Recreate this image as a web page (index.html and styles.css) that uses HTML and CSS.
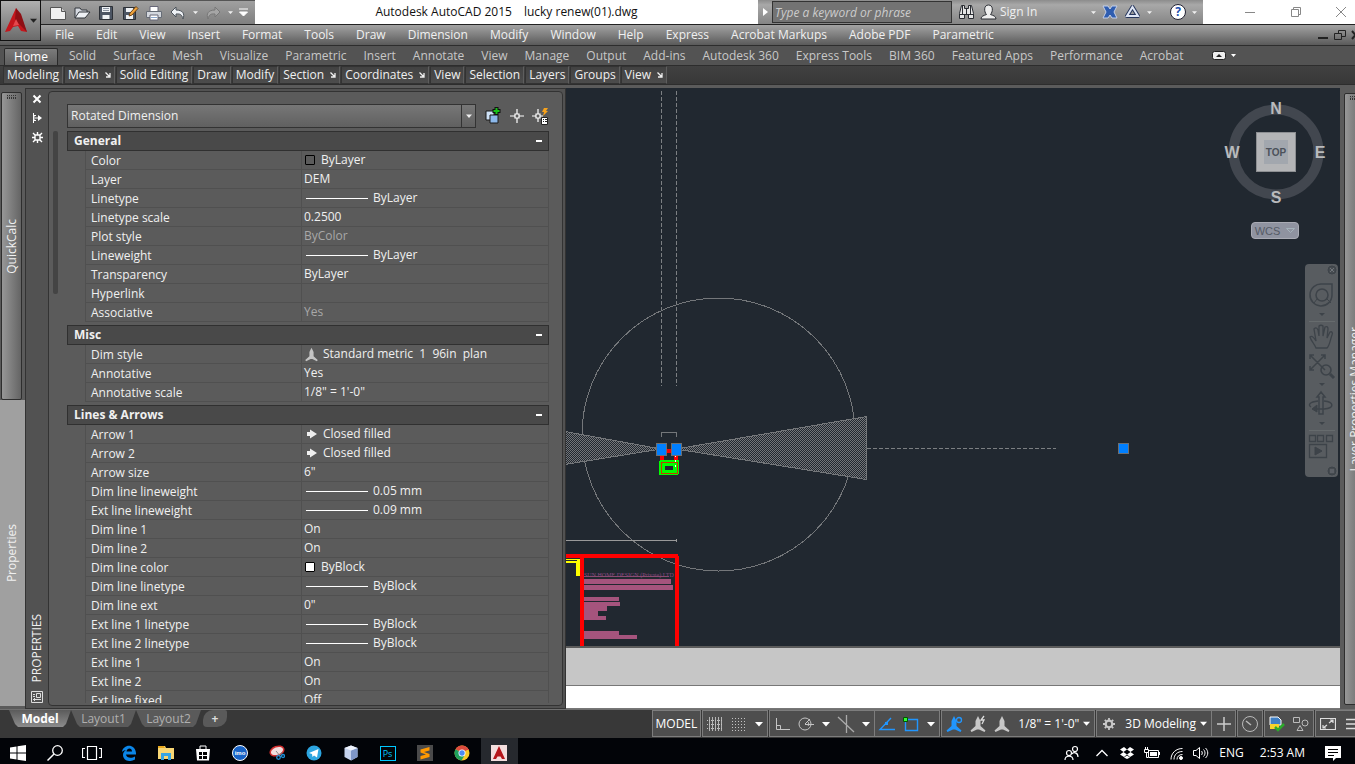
FILE: index.html
```
<!DOCTYPE html>
<html lang="en">
  <head>
    <meta charset="UTF-8" />
    <meta name="viewport" content="width=device-width, initial-scale=1.0" />
    <title>Autodesk AutoCAD 2015 - lucky renew(01).dwg</title>
    <link rel="stylesheet" href="styles.css">
  </head>
  <body>
    <!-- Shared icons -->
    <svg class="defs" aria-hidden="true">
      <symbol id="caret" viewBox="0 0 8 8"><path d="M0 2h8L4 6.500z" fill="currentColor" /></symbol>
      <symbol id="launch" viewBox="0 0 6 6"><path d="M0.500 0.500L4.500 4.500M5 1v4H1" fill="none" stroke="currentColor" stroke-width="1.300" /></symbol>
      <symbol id="scale" viewBox="0 0 18 18"><path d="M9 1l2.500 5v5l5 4.500-1 1.500-5.500-2.500H8L2.500 17l-1-1.500 5-4.500V6z" fill="currentColor" /></symbol>
      <symbol id="arrowhead" viewBox="0 0 12 10"><path d="M1 3h3V0.500L11 5 4 9.500V7H1z" fill="#eee" /></symbol>
      <symbol id="gear" viewBox="0 0 12 12"><circle cx="6" cy="6" r="3.300" fill="none" stroke="currentColor" stroke-width="2.200" /><path d="M6 0v12M0 6h12M1.800 1.800l8.400 8.400M10.200 1.800l-8.400 8.400" stroke="currentColor" stroke-width="1.800" stroke-dasharray="2.200 7.600" /></symbol>
    </svg>

    <header class="titlebar">
      <div class="quick-access">
        <button aria-label="New"><svg width="18" height="16"><path d="M1.500 2.500h11l4 4v8h-15z" fill="#f1f1f1" stroke="#555" /><path d="M12.500 2.500v4h4" fill="#ccc" stroke="#555" /></svg></button>
        <button aria-label="Open"><svg width="18" height="16"><path d="M2 13V3h5l1.500 2H14v2" fill="#d5d9e0" stroke="#33373c" /><path d="M2 13l4-6h11l-5 6z" fill="#eef1f5" stroke="#33373c" /></svg></button>
        <button aria-label="Save"><svg width="18" height="16"><path d="M2.500 1.500h13v13h-13z" fill="#4c5563" stroke="#2c3036" /><path d="M5 2h8v5H5zM5.500 10h7v4h-7z" fill="#eef1f4" /><path d="M6 3.500h6M6 5.500h6" stroke="#8a93a0" /></svg></button>
        <button aria-label="Save As"><svg width="18" height="16"><path d="M2.500 2.500h12v12h-12z" fill="#4c5563" stroke="#2c3036" /><path d="M5 3h7v4H5zM5 10h7v4H5z" fill="#eef1f4" /><path d="M8 11l1-3 6-6.500 2 2L11 10z" fill="#f0a33c" stroke="#6b4418" /></svg></button>
        <button aria-label="Plot"><svg width="18" height="16"><path d="M5 1.500h8V7H5z" fill="#fff" stroke="#667" /><path d="M1.500 6.500h15v6h-15z" fill="#d3d7de" stroke="#666c76" /><path d="M5 10h8v5H5z" fill="#fff" stroke="#667" /><path d="M6 12.500h6" stroke="#8ca9cf" /></svg></button>
        <button aria-label="Undo"><svg width="18" height="16"><path d="M7 2L2 7l5 5V9c4-.5 6 .5 7 5 2-5 0-9-7-9z" fill="#eef1f5" stroke="#4d545c" /></svg></button>
        <button class="drop" aria-label="Undo list"><svg width="5" height="5"><use href="#caret" /></svg></button>
        <button aria-label="Redo"><svg width="18" height="16"><path d="M11 2l5 5-5 5V9c-4-.5-6 .5-7 5-2-5 0-9 7-9z" fill="#a5a5a5" stroke="#777" /></svg></button>
        <button class="drop" aria-label="Redo list"><svg width="5" height="5"><use href="#caret" /></svg></button>
        <button class="drop" aria-label="Customize"><svg width="9" height="9"><path d="M0 1h9M0.500 4h8L4.500 8z" fill="#fff" stroke="#fff" /></svg></button>
      </div>
      <h1 class="title"><span>Autodesk AutoCAD 2015</span><span>lucky renew(01).dwg</span></h1>
      <div class="infocenter">
        <button class="search-toggle" aria-label="Collapse search"><svg width="5" height="8"><path d="M0 0l5 4-5 4z" fill="#fff" /></svg></button>
        <input type="text" class="search" aria-label="Search" placeholder="Type a keyword or phrase" />
        <button aria-label="Find"><svg width="18" height="18"><path d="M3.500 2.500h3v3h4v-3h3l2 8v5h-5v-4h-4v4h-5v-5z" fill="#e6e6e6" stroke="#2a2d33" /><path d="M4.500 3v8M12.500 3v8M2 11.500h5M10 11.500h5M8.500 6v5" stroke="#2a2d33" /></svg></button>
        <button class="sign-in"><svg width="18" height="18"><path d="M1 16c0-3 3-3.500 5.500-4.500C4 9 3.500 2 8.500 2S13 9 10.500 11.500C13 12.500 16 13 16 16z" fill="#eee" stroke="#2a2d33" /></svg>Sign In</button>
        <button class="drop" aria-label="Account menu"><svg width="5" height="5"><use href="#caret" /></svg></button>
        <button aria-label="Exchange"><svg width="16" height="16"><path d="M1 2h5l2 3 2-3h5l-3 6 3 6h-5l-2-3-2 3H1l3-6z" fill="#2f5db0" stroke="#c5d0e8" /></svg></button>
        <button aria-label="Stay connected"><svg width="17" height="16"><path d="M8.500 3L14 12H3z" fill="none" stroke="#26365c" stroke-width="4" stroke-linejoin="round" /><path d="M8.500 3L14 12H3z" fill="none" stroke="#dfe6f5" stroke-width="2" /></svg></button>
        <button class="drop" aria-label="Connect menu"><svg width="5" height="5"><use href="#caret" /></svg></button>
        <button class="help" aria-label="Help">?</button>
        <button class="drop" aria-label="Help menu"><svg width="5" height="5"><use href="#caret" /></svg></button>
      </div>
      <div class="window-buttons">
        <button aria-label="Minimize"><svg width="12" height="12"><path d="M1 6.500h10" stroke="#888" /></svg></button>
        <button aria-label="Restore"><svg width="12" height="12"><path d="M1.500 3.500h7v7h-7zM3.500 3V1.500h7v7H9" fill="none" stroke="#888" /></svg></button>
        <button aria-label="Close"><svg width="12" height="12"><path d="M1 1l10 10M11 1L1 11" stroke="#888" /></svg></button>
      </div>
    </header>

    <button class="app-button" aria-label="Application menu">
      <svg width="24" height="28"><path d="M12 1L1 25l5-1 3-4 5-1 3 5 6 1z" fill="#c4161c" /><path d="M12 1l-1 12 12 12-6-18z" fill="#8e0f14" /><path d="M9 19l3-7 3 6z" fill="#e5484d" /></svg>
      <svg class="dark" width="7" height="7"><use href="#caret" /></svg>
    </button>

    <nav class="menubar">
      <button>File</button><button>Edit</button><button>View</button><button>Insert</button><button>Format</button><button>Tools</button><button>Draw</button><button>Dimension</button><button>Modify</button><button>Window</button><button>Help</button><button>Express</button><button>Acrobat Markups</button><button>Adobe PDF</button><button>Parametric</button>
      <div class="doc-buttons">
        <svg width="37" height="14"><path d="M0 10h10" stroke="#222" stroke-width="2" /><path d="M16.500 5.500h7v6h-7zM20.500 5V2.500h7v6H24" fill="none" stroke="#222" stroke-width="1" /><path d="M34 3l7 8M34 11l7-8" stroke="#222" stroke-width="2" /></svg>
      </div>
    </nav>

    <nav class="ribbon-tabs">
      <button class="active">Home</button><button>Solid</button><button>Surface</button><button>Mesh</button><button>Visualize</button><button>Parametric</button><button>Insert</button><button>Annotate</button><button>View</button><button>Manage</button><button>Output</button><button>Add-ins</button><button>Autodesk 360</button><button>Express Tools</button><button>BIM 360</button><button>Featured Apps</button><button>Performance</button><button>Acrobat</button>
      <button class="minimize-ribbon" aria-label="Minimize ribbon"><svg width="24" height="9"><rect x="0.500" y="0.500" width="13" height="8" rx="2" fill="#eee" stroke="#222" /><path d="M4 6h6L7 3z" fill="#222" /><path d="M19 3h5l-2.500 3z" fill="#fff" /></svg></button>
    </nav>

    <div class="ribbon-panels">
      <button>Modeling</button><button>Mesh <svg><use href="#launch" /></svg></button><button>Solid Editing</button><button>Draw</button><button>Modify</button><button>Section <svg><use href="#launch" /></svg></button><button>Coordinates <svg><use href="#launch" /></svg></button><button>View</button><button>Selection</button><button>Layers</button><button>Groups</button><button>View <svg><use href="#launch" /></svg></button>
    </div>

    <main class="workspace">
      <aside class="dock">
        <button class="dock-tab"><i class="grip"></i><span>QuickCalc</span></button>
        <button class="dock-tab selected"><span>Properties</span></button>
      </aside>

      <section class="palette">
        <div class="palette-strip">
          <button aria-label="Close palette"><svg width="10" height="10"><path d="M1.500 1.500l7 7M8.500 1.500l-7 7" stroke="#fff" stroke-width="2" /></svg></button>
          <button aria-label="Auto-hide"><svg width="10" height="10"><path d="M1.500 0v10M4 2.500h-2v5h2M3 5h4" fill="none" stroke="#fff" /><path d="M6 2l4 3-4 3z" fill="#fff" /></svg></button>
          <button aria-label="Palette settings"><svg width="11" height="11"><path d="M3 3h5v5H3zM1 1l2 2M8 8l2 2M10 1L8 3M3 8l-2 2M5.500 0v3M5.500 8v3M0 5.500h3M8 5.500h3" fill="none" stroke="#fff" stroke-width="1.400" /></svg></button>
          <h2>PROPERTIES</h2>
          <svg width="12" height="12"><path d="M0.500 0.500h11v11H.5zM5.500 2.500h4v4h-4zM2 3.500h2M2 5.500h2M3.500 7v3M2 8.500h8" fill="none" stroke="#ddd" /></svg>
        </div>

        <div class="palette-body">
          <div class="object-row">
            <div class="combo">
              <select aria-label="Object type"><option>Rotated Dimension</option></select>
              <span class="combo-arrow"><svg width="6" height="6"><use href="#caret" /></svg></span>
            </div>
            <button aria-label="Toggle PICKADD"><svg width="18" height="18"><path d="M2 4h8v9H2z" fill="#cfe2f7" stroke="#1b1b1b" /><path d="M6 8h8v8H6z" fill="#8cb8ea" stroke="#1b1b1b" /><path d="M12.500 0v8M8.500 4h8" stroke="#111" stroke-width="4" /><path d="M12.500 1v6M9.500 4h6" stroke="#19c319" stroke-width="2" /></svg></button>
            <button aria-label="Select objects"><svg width="14" height="14"><path d="M7 0v5M7 9v5M0 7h5M9 7h5M5 5h4v4H5z" fill="none" stroke="#fff" stroke-width="1.200" /></svg></button>
            <button aria-label="Quick select"><svg width="17" height="18"><path d="M6 2v5M6 11v4M0 9h4M8 9h3M4 7h4v4H4z" fill="none" stroke="#fff" stroke-width="1.200" /><path d="M12 1h4l-2 3h2l-5 5 1-4h-2z" fill="#f6a21c" /><path d="M9.500 10.500h6v7h-6z" fill="#fff" stroke="#222" /><path d="M11 12.500h1M13 12.500h2M11 14.500h1M13 14.500h2" stroke="#222" /></svg></button>
          </div>

          <div class="property-list">
            <table>
              <caption>General <button aria-label="Collapse General"></button></caption>
              <tr><th>Color</th><td><i class="swatch"></i>ByLayer</td></tr>
              <tr><th>Layer</th><td>DEM</td></tr>
              <tr><th>Linetype</th><td><i class="line"></i>ByLayer</td></tr>
              <tr><th>Linetype scale</th><td>0.2500</td></tr>
              <tr><th>Plot style</th><td class="readonly">ByColor</td></tr>
              <tr><th>Lineweight</th><td><i class="line"></i>ByLayer</td></tr>
              <tr><th>Transparency</th><td>ByLayer</td></tr>
              <tr><th>Hyperlink</th><td></td></tr>
              <tr><th>Associative</th><td class="readonly">Yes</td></tr>
            </table>
            <table>
              <caption>Misc <button aria-label="Collapse Misc"></button></caption>
              <tr><th>Dim style</th><td class="spaced"><svg width="15" height="15"><use href="#scale" /></svg>Standard metric  1  96in  plan</td></tr>
              <tr><th>Annotative</th><td>Yes</td></tr>
              <tr><th>Annotative scale</th><td>1/8" = 1'-0"</td></tr>
            </table>
            <table>
              <caption>Lines &amp; Arrows <button aria-label="Collapse Lines and Arrows"></button></caption>
              <tr><th>Arrow 1</th><td><svg class="head" width="12" height="10"><use href="#arrowhead" /></svg>Closed filled</td></tr>
              <tr><th>Arrow 2</th><td><svg class="head" width="12" height="10"><use href="#arrowhead" /></svg>Closed filled</td></tr>
              <tr><th>Arrow size</th><td>6"</td></tr>
              <tr><th>Dim line lineweight</th><td><i class="line"></i>0.05 mm</td></tr>
              <tr><th>Ext line lineweight</th><td><i class="line"></i>0.09 mm</td></tr>
              <tr><th>Dim line 1</th><td>On</td></tr>
              <tr><th>Dim line 2</th><td>On</td></tr>
              <tr><th>Dim line color</th><td><i class="swatch white"></i>ByBlock</td></tr>
              <tr><th>Dim line linetype</th><td><i class="line"></i>ByBlock</td></tr>
              <tr><th>Dim line ext</th><td>0"</td></tr>
              <tr><th>Ext line 1 linetype</th><td><i class="line"></i>ByBlock</td></tr>
              <tr><th>Ext line 2 linetype</th><td><i class="line"></i>ByBlock</td></tr>
              <tr><th>Ext line 1</th><td>On</td></tr>
              <tr><th>Ext line 2</th><td>On</td></tr>
              <tr><th>Ext line fixed</th><td>Off</td></tr>
            </table>
          </div>
        </div>
      </section>

      <section class="editor">
        <div class="canvas">
          <svg class="drawing" shape-rendering="crispEdges">
            <defs>
              <pattern id="hatch" width="2" height="2" patternUnits="userSpaceOnUse">
                <path d="M0 0h1v1H0zM1 1h1v1H1z" fill="#737578" />
              </pattern>
            </defs>
            <g transform="translate(-566 -88)">
              <path d="M661.500 91v295M676.500 91v295" stroke="#7c7f82" stroke-dasharray="4 2" />
              <circle cx="718.500" cy="434.500" r="136.500" fill="none" stroke="#74777a" />
              <path d="M676 449L867 416v64z" fill="#212830" />
              <path d="M661 449L566 432v33z" fill="#212830" />
              <path d="M676 449L866.500 416.500v63z" fill="url(#hatch)" stroke="#74777a" />
              <path d="M661 449L565 431.500v33z" fill="url(#hatch)" stroke="#74777a" />
              <path d="M867 448.500h189" stroke="#7c7f82" stroke-dasharray="4 2" />
              <path d="M661.500 437v-4.500h15v4.500" fill="none" stroke="#74777a" />
              <path d="M662 450.500h15M661.500 450v12M675.500 450v12" stroke="#f00" stroke-width="4" />
              <rect x="659" y="460" width="20" height="15" rx="2" fill="#0f0" />
              <path d="M661.500 462.500h16v11h-16z" fill="none" stroke="#c33c00" />
              <rect x="665" y="466" width="8" height="4" fill="#212830" />
              <path d="M675.500 455v15" stroke="#fff" stroke-dasharray="2 3" />
              <g fill="#007fff" stroke="#6b6f73">
                <rect x="656.500" y="443.500" width="10" height="12" />
                <rect x="671.500" y="443.500" width="10" height="12" />
                <rect x="1118.500" y="443.500" width="10" height="10" />
              </g>
              <path d="M566 540.500h111M676.500 539v3" stroke="#999" />
              <path d="M566 556h112M581.500 556v90M676.500 556v90" stroke="#f00" stroke-width="4" />
              <path d="M566 560.500h11.500V576" fill="none" stroke="#ff0" stroke-width="4" />
              <path d="M566 560.500h11" stroke="#212830" />
              <text x="584" y="577" class="plot-title">SUN HOME DESIGN (Private) LTD</text>
              <path d="M584 579h87v5h-87zM584 585h89v5h-89zM584 597h35v4h-35zM584 602h36v4h-36zM584 606h23v5h-23zM584 611h14v5h-14zM584 616h22v4h-22zM584 631h35v4h-35zM584 635h53v4h-53z" fill="#a5547d" />
              <path d="M584 576.500h85" stroke="#8a4a72" />
            </g>
          </svg>

          <svg class="viewcube" width="112" height="112" viewBox="0 0 112 112">
            <circle cx="56" cy="56" r="42.500" fill="none" stroke="#42474f" stroke-width="10" />
            <rect x="36.500" y="36.500" width="39" height="39" fill="#b4b5b7" stroke="#8d8f92" />
            <rect x="44" y="44" width="24" height="24" fill="#a2a7ae" />
            <text x="56" y="60" class="cube-face">TOP</text>
            <text x="56" y="18">N</text>
            <text x="100" y="62">E</text>
            <text x="56" y="107">S</text>
            <text x="12" y="62">W</text>
          </svg>
          <button class="wcs">WCS <svg width="9" height="6"><path d="M0.500 0.500h8l-4 4z" fill="none" stroke="#a5b3bb" /></svg></button>

          <div class="navbar">
            <svg width="33" height="213" fill="none" stroke="#3d4349">
              <circle cx="27" cy="6" r="4" fill="#464b50" /><path d="M25 4l4 4M29 4l-4 4" stroke="#70757a" />
              <path d="M17 20h10v11a11 11 0 1 1-10-11z" stroke-width="1.500" /><circle cx="17" cy="31" r="6" stroke-width="1.500" /><path d="M12 35l-3 4M22 35l4 4" />
              <path d="M14 49h6l-3 3z" fill="#3d4349" stroke="none" /><path d="M4 57.500h26" stroke="#666b6d" />
              <path d="M11 84c-2-5-5-7-6-11 2-2 4 1 6 4L9 65c2-2 3-1 4 1l1 6V62c1-1 3-1 4 0v10l2-9c2-1 3 0 3 2l-1 9 3-6c2-1 3 1 2 3-2 5-2 10-5 13z" stroke-width="1.300" />
              <path d="M5 91l15 15M20 91L5 106M5 95v-4h4M16 91h4v4M5 102v4h4" stroke-width="1.500" /><circle cx="21" cy="106" r="5" stroke-width="1.600" /><path d="M25 110l4 4" stroke-width="3" />
              <path d="M14 119h6l-3 3z" fill="#3d4349" stroke="none" />
              <path d="M14 150v-17h-2l4-5 4 5h-2v17zM13 137c-9 1-10 4-7 6M19 137c10 1 11 7 0 8h-8" stroke-width="1.500" /><path d="M12 141v7l-5-3z" fill="#3d4349" />
              <path d="M14 158h6l-3 3z" fill="#3d4349" stroke="none" /><path d="M4 166.500h26" stroke="#666b6d" />
              <path d="M4.500 171.500h6v6h-6zM12.500 171.500h6v6h-6zM21.500 171.500h6v6h-6zM4.500 180.500h17v13h-17z" stroke-width="1.300" /><path d="M10 183l7 4-7 4z" fill="#3d4349" />
              <circle cx="27" cy="207" r="4" fill="#464b50" /><path d="M25 206h4M25 208h4" stroke="#70757a" />
            </svg>
          </div>
        </div>
        <div class="command-history"></div>
        <input type="text" class="command-line" aria-label="Command line" />
      </section>

      <aside class="dock dock-right">
        <button class="dock-tab"><i class="grip"></i><span>Layer Properties Manager</span></button>
      </aside>
    </main>

    <footer class="statusbar">
      <div class="layout-tabs">
        <button class="active">Model</button><button>Layout1</button><button>Layout2</button><button class="add" aria-label="New layout">+</button>
      </div>
      <div class="status-group"><button>MODEL</button></div>
      <div class="status-group">
        <button aria-label="Grid"><svg width="16" height="16"><path d="M2.500 1v14M5.500 1v14M8.500 1v14M11.500 1v14M14.500 1v14" stroke="#b4b4b4" /><path d="M0 4.500h16M0 8.500h16M0 12.500h16" stroke="#c4c4c4" stroke-dasharray="1 1" /></svg></button>
        <button aria-label="Snap"><svg width="16" height="16"><path d="M1 2.500h14M1 5.500h14M1 8.500h14M1 11.500h14M1 14.500h14" stroke="#c4c4c4" stroke-dasharray="1 2" /></svg></button>
        <button class="drop" aria-label="Snap settings"><svg width="8" height="8"><use href="#caret" /></svg></button>
      </div>
      <div class="status-group">
        <button aria-label="Ortho"><svg width="16" height="16"><path d="M2.500 2v11.500H16M2.500 9.500h4v4" fill="none" stroke="#c4c4c4" /></svg></button>
        <button aria-label="Polar"><svg width="18" height="16"><circle cx="8" cy="8" r="6" fill="none" stroke="#c4c4c4" /><path d="M8 8.500h9M8 8l5-5M11 6c1 1 1 3 0 4" fill="none" stroke="#c4c4c4" /></svg></button>
        <button class="drop" aria-label="Polar settings"><svg width="8" height="8"><use href="#caret" /></svg></button>
        <button aria-label="Isometric"><svg width="18" height="18"><path d="M1 2l16 15M9.500 0v18" stroke="#aaa" stroke-width="1.300" /></svg></button>
        <button class="drop" aria-label="Isometric settings"><svg width="8" height="8"><use href="#caret" /></svg></button>
        <button class="divided" aria-label="Object snap tracking"><svg width="18" height="16"><path d="M13 2L2 13.500h15" fill="none" stroke="#2196ff" stroke-width="1.400" /><rect x="7" y="6" width="3" height="3" fill="#2196ff" /></svg></button>
        <button aria-label="Object snap"><svg width="18" height="18"><path d="M3.500 4.500h12v11h-12z" fill="none" stroke="#2196ff" stroke-width="1.400" /><path d="M1.500 2.500h4v4h-4z" fill="#3f3" stroke="#050" /></svg></button>
        <button class="drop" aria-label="Object snap settings"><svg width="8" height="8"><use href="#caret" /></svg></button>
      </div>
      <div class="status-group">
        <button class="on" aria-label="Annotation visibility"><svg width="18" height="18"><use href="#scale" /><circle cx="14" cy="5" r="2.500" fill="none" stroke="currentColor" stroke-width="1.300" /></svg></button>
        <button aria-label="Auto scale"><svg width="18" height="18"><use href="#scale" /><path d="M15 1l-3 4h3l-2 4" fill="none" stroke="#ddd" stroke-width="1.300" /></svg></button>
        <button aria-label="Annotation scale icon"><svg width="18" height="18"><use href="#scale" /></svg></button>
        <button class="wide">1/8" = 1'-0" <svg width="7" height="7"><use href="#caret" /></svg></button>
      </div>
      <div class="status-group">
        <button aria-label="Workspace"><svg width="12" height="12"><use href="#gear" /></svg></button>
        <button class="wide">3D Modeling <svg width="7" height="7"><use href="#caret" /></svg></button>
        <button class="divided" aria-label="Annotation monitor"><svg width="14" height="14"><path d="M7 0v14M0 7h14" stroke="#ccc" stroke-width="1.500" /></svg></button>
      </div>
      <div class="status-group"><button aria-label="Isolate objects"><svg width="18" height="18"><circle cx="9" cy="9" r="7.500" fill="none" stroke="#bbb" /><path d="M5 6l5 4" stroke="#bbb" stroke-width="1.500" /></svg></button></div>
      <div class="status-group">
        <button aria-label="Hardware acceleration"><svg width="18" height="18"><path d="M2 2h8l3 3v5H2z" fill="#3f7fc4" stroke="#fff" /><path d="M2 9h9v5H2z" fill="#f6d32d" /><path d="M7 12l3 3 6-6" fill="none" stroke="#2cab2c" stroke-width="2.500" /></svg></button>
        <button aria-label="Isolate"><svg width="18" height="16"><path d="M1.500 1.500h6v5h-6zM5 14.500l3-5 3 5z" fill="none" stroke="#bbb" /><circle cx="13" cy="7" r="3" fill="none" stroke="#bbb" /></svg></button>
      </div>
      <div class="status-group last">
        <button aria-label="Clean screen"><svg width="16" height="12"><path d="M0.500 0.500h15v11H.5zM9 5l4-3M10 2h3v3M7 7l-4 3M3 7v3h3" fill="none" stroke="#ddd" stroke-width="1.200" /></svg></button>
        <button aria-label="Customization"><svg width="12" height="12"><path d="M0 1.500h12M0 6h12M0 10.500h12" stroke="#ddd" stroke-width="1.500" /></svg></button>
      </div>
    </footer>

    <div class="taskbar">
      <button aria-label="Start"><svg width="16" height="16"><path d="M0 2.500l6.500-1v6H0zM7.500 1.300L16 0v7.500H7.500zM0 8.500h6.500v6l-6.500-1zM7.500 8.500H16V16l-8.500-1.300z" fill="#fff" /></svg></button>
      <button aria-label="Search"><svg width="16" height="16"><circle cx="10.500" cy="5.500" r="4.800" fill="none" stroke="#fff" stroke-width="1.300" /><path d="M7 9l-6.500 6.500" stroke="#fff" stroke-width="1.500" /></svg></button>
      <button aria-label="Task view"><svg width="20" height="14"><path d="M5.500 0.500h9v13h-9zM3 2.500H.5v9H3M17 2.500h2.500v9H17" fill="none" stroke="#fff" stroke-width="1.200" /></svg></button>
      <button aria-label="Edge"><svg width="16" height="16"><path d="M1 7C2-1 14-2 15 8v1.500H5c.5 4 6 4 9 2v3C8 18 2 15 2 10c0-2.500 1.500-4 3-5-2 0-3 1-4 2zM5.500 6.500H11c0-4-5-4-5.500 0z" fill="#0b86e8" /></svg></button>
      <button aria-label="File Explorer"><svg width="16" height="16"><path d="M0 1h7l1 2h8v11H0z" fill="#f8d775" /><path d="M0 1h6l1 2H0z" fill="#e9a81e" /><path d="M3 8h10v7h-3v-4H6v4H3z" fill="#35a5e5" /></svg></button>
      <button aria-label="Store"><svg width="14" height="16"><path d="M0 4h14l-1 11.500H1z" fill="#fff" /><path d="M4 4V1h6v3" fill="none" stroke="#fff" /><path d="M3 7h3v3H3zM7 7h4v3H7zM3 11h3v3H3zM7 11h4v3H7z" fill="#000" /></svg></button>
      <button aria-label="imo"><svg width="16" height="16"><circle cx="8" cy="8" r="7.500" fill="#1763c6" stroke="#fff" /><text x="8" y="10" class="imo">imo</text></svg></button>
      <button aria-label="Snipping Tool"><svg width="16" height="16"><ellipse cx="8" cy="6" rx="7" ry="4.500" transform="rotate(-20 8 6)" fill="#f1dede" stroke="#d12f2f" stroke-width="1.500" /><path d="M7 6l5 6M13 7l-3 4" stroke="#888" /><circle cx="9.500" cy="12.500" r="1.800" fill="none" stroke="#1c8fd6" stroke-width="1.300" /><circle cx="14" cy="11" r="1.500" fill="none" stroke="#1c8fd6" stroke-width="1.300" /></svg></button>
      <button aria-label="Telegram"><svg width="16" height="16"><circle cx="8" cy="8" r="7.500" fill="#2ca5e0" /><path d="M3 8l9.500-4L11 12.500 8 10.500 6.500 12 6 9z" fill="#fff" /></svg></button>
      <button aria-label="VirtualBox"><svg width="14" height="16"><path d="M7 0.500l6.500 2.500v9L7 15.500.5 12V3z" fill="#c5d3ee" /><path d="M7 5.500l6.500-2.500v9L7 15.500z" fill="#7f97c8" /><path d="M7 .5L13.500 3 7 5.500.5 3z" fill="#eef3fc" /></svg></button>
      <button aria-label="Photoshop"><span class="ps">Ps</span></button>
      <button aria-label="Sublime Text"><svg width="16" height="16"><path d="M0 0h16v16H0z" fill="#4a4a4a" /><path d="M12.500 2v3.500L7 7l5.500 2v3L3.500 14.500V11L9 9.500l-5.500-2v-3z" fill="#ff9800" /></svg></button>
      <button aria-label="Chrome"><svg width="16" height="16"><circle cx="8" cy="8" r="7.500" fill="#f7c928" /><path d="M8 8L1.500 4.300A7.500 7.500 0 0 1 14.500 4.300z" fill="#dd4b3e" /><path d="M8 8L1.500 4.300A7.500 7.500 0 0 0 7.500 15.500l3-5z" fill="#1fa15d" /><path d="M8 4.500h7" stroke="#dd4b3e" /><circle cx="8" cy="8" r="3.500" fill="#fff" /><circle cx="8" cy="8" r="2.700" fill="#4b8bf4" /></svg></button>
      <button class="running" aria-label="AutoCAD"><svg width="16" height="16"><path d="M0 0h16v16H0z" fill="#f3dede" /><path d="M8 1L2 14h3l1.500-2.500h3L11 14h3z" fill="#b5161b" /></svg></button>

      <div class="tray">
        <svg width="16" height="16" fill="none" stroke="#fff" stroke-width="1.200"><circle cx="11" cy="4" r="2.500" /><path d="M8 9c1-2 6-2 6 3" /><circle cx="5" cy="8" r="2.500" /><path d="M1 15c0-5 8-5 8 0" /></svg>
        <svg class="chevron" width="12" height="12" fill="none" stroke="#fff" stroke-width="1.300"><path d="M0.500 9L6 3.500 11.500 9" /></svg>
        <svg width="14" height="12" fill="#fff"><path d="M4 0L0 2.500 3.500 5 7 2.500zM10 0l4 2.500L10.500 5 7 2.500zM3.500 5L0 7.500 4 10l3-2.500zM10.500 5L14 7.500 10 10 7 7.500zM4 10.500L7 8.500l3 2L7 12z" /></svg>
        <svg width="16" height="12"><path d="M4.500 3.500h10v7h-10z" fill="none" stroke="#fff" /><path d="M6 5h7v4H6zM15 5h1v3h-1z" fill="#fff" /><path d="M0.500 2.500h4v3h-4zM1.500 0v2M3.500 0v2M2.500 6v4.500H4" fill="none" stroke="#fff" /></svg>
        <svg width="13" height="13" fill="none" stroke="#fff"><path d="M1 12.500C1 6 6 1.500 12.500 1.500M4 12.500c0-5 3.500-8 8.500-8M7 12.500c0-3 2-5 5.500-5" /><circle cx="11" cy="11" r="1.500" fill="#fff" /></svg>
        <svg width="16" height="14" fill="none" stroke="#fff"><path d="M0.500 4.500h2.500l3.500-3v11L3 9.500H.5zM8.500 5c1 1 1 3 0 4M10.500 3.500c2 2 2 5 0 7M12.500 2c3 3 3 7 0 10" /></svg>
        <span>ENG</span>
        <time>2:53 AM</time>
        <svg width="16" height="16"><path d="M0 1h16v12h-5l-3 3v-3H0z" fill="#fff" /><path d="M3 4.500h10M3 7.500h10M3 10.500h6" stroke="#000" /></svg>
      </div>
    </div>
  </body>
</html>
```
FILE: styles.css
```
/* Base */
:root {
  --frame: #5b5b5b;
  --dark: #333;
  --canvas: #212830;
  --text: #f0f0f0;
}

* {
  box-sizing: border-box;
}

body {
  margin: 0;
  height: 100vh;
  display: flex;
  flex-direction: column;
  overflow: hidden;
  background: var(--frame);
  color: var(--text);
  font: 12px/16px "Open Sans", "Noto Sans", sans-serif;
}

button,
input,
select {
  font: inherit;
  color: inherit;
  background: none;
  border: 0;
  border-radius: 0;
  padding: 0;
  margin: 0;
}

button {
  display: inline-flex;
  align-items: center;
  justify-content: center;
  white-space: nowrap;
}

svg {
  flex: none;
  display: block;
}

.defs {
  position: absolute;
  width: 0;
  height: 0;
}

/* Title bar */
.titlebar {
  display: flex;
  height: 25px;
  flex: none;
  background: #fff;
  border-bottom: 1px solid #222;
}

.quick-access {
  display: flex;
  align-items: center;
  gap: 6px;
  width: 255px;
  padding-left: 49px;
  background: linear-gradient(#a0a0a0, #7f7f7f);
  border-top: 1px solid #555;
}

.title {
  flex: 1;
  display: flex;
  justify-content: center;
  gap: 12px;
  margin: 0;
  font-size: 12px;
  font-weight: 400;
  line-height: 24px;
  color: #111;
}

.infocenter {
  display: flex;
  align-items: center;
  gap: 6px;
  width: 445px;
  background: linear-gradient(#8c8c8c, #a8a8a8 20%, #858585);
}

.search-toggle {
  width: 14px;
  height: 24px;
  margin-right: -6px;
}

.search {
  width: 180px;
  height: 22px;
  padding: 0 2px;
  background: #737373;
  border: 1px solid #333;
}

.search::placeholder {
  color: #ccc;
  font-style: italic;
  opacity: 1;
}

.sign-in {
  gap: 2px;
  margin: 0 auto 0 -2px;
}

.help {
  width: 16px;
  height: 16px;
  margin-left: 12px;
  border: 1px solid #223;
  border-radius: 50%;
  background: #fff;
  color: #1c4fb0;
  font-weight: 700;
}

.infocenter .drop:last-child {
  margin-right: 6px;
}

.window-buttons {
  display: flex;
  justify-content: space-between;
  width: 152px;
  padding: 0 8px 0 41px;
}

/* Application button */
.app-button {
  position: absolute;
  top: 0;
  left: 0;
  width: 41px;
  height: 41px;
  gap: 2px;
  background: linear-gradient(#b0b0b0, #6a6a6a);
  border: 1px solid #111;
  z-index: 2;
}

.app-button .dark {
  color: #222;
}

/* Menus */
.menubar {
  display: flex;
  flex: none;
  gap: 22px;
  height: 21px;
  padding-left: 55px;
  background: linear-gradient(#a3a3a3, #5a5a5a);
  border-bottom: 1px solid #2d2d2d;
}

.doc-buttons {
  margin-left: auto;
  align-self: center;
}

.ribbon-tabs {
  display: flex;
  flex: none;
  gap: 17px;
  height: 20px;
  padding-left: 4px;
  background: #535353;
  border-bottom: 1px solid #2d2d2d;
  color: #c8c8c8;
}

.ribbon-tabs .active {
  width: 54px;
  margin: 2px -6px 0 0;
  background: linear-gradient(#7b7b7b, #5e5e5e);
  border: 1px solid #2a2a2a;
  border-bottom: 0;
  border-radius: 2px 2px 0 0;
  color: #fff;
}

.minimize-ribbon {
  margin-left: 12px;
}

.ribbon-panels {
  display: flex;
  flex: none;
  gap: 1px;
  height: 19px;
  padding-left: 3px;
  background: linear-gradient(#414141, #383838);
  border-bottom: 1px solid #2d2d2d;
}

.ribbon-panels button {
  gap: 6px;
  padding: 0 3px;
  background: linear-gradient(#424242, #4c4c4c);
  border: 1px solid #333;
  border-right-color: #5e5e5e;
}

.ribbon-panels svg {
  width: 6px;
  height: 6px;
}

/* Workspace */
.workspace {
  flex: 1;
  display: flex;
  min-height: 0;
}

.dock {
  display: flex;
  flex-direction: column;
  flex: none;
  width: 25px;
  padding: 7px 0 3px;
}

.dock-tab {
  flex: 1;
  position: relative;
  width: 21px;
  margin-left: 1px;
  background: linear-gradient(90deg, #979797, #646464);
  border: 1px solid #2e2e2e;
  border-radius: 2px;
}

.dock-tab span,
.palette-strip h2 {
  writing-mode: vertical-rl;
  transform: rotate(180deg);
}

.dock-tab.selected {
  width: 25px;
  margin-left: 0;
  padding-right: 2px;
  background: #a0a0a0;
  border: 0;
  border-radius: 0;
}

.grip {
  position: absolute;
  top: 2px;
  left: 5px;
  width: 10px;
  height: 4px;
  background:
    linear-gradient(transparent 1px, #777 1px 2px, transparent 2px),
    repeating-linear-gradient(90deg, #333 0 1px, transparent 1px 2px);
}

.dock-right {
  width: 15px;
  padding: 8px 0 4px 3px;
  overflow: hidden;
}

/* Properties palette */
.palette {
  display: flex;
  flex: none;
  width: 541px;
  margin-top: 3px;
  background: #525252;
  border: 1px solid var(--dark);
}

.palette-strip {
  display: flex;
  flex-direction: column;
  align-items: center;
  gap: 9px;
  width: 22px;
  padding: 5px 0;
}

.palette-strip h2 {
  margin: auto 0 0;
  font-size: 12px;
  font-weight: 400;
}

.palette-body {
  position: relative;
  flex: 1;
  display: flex;
  flex-direction: column;
  gap: 3px;
  min-width: 0;
  margin: 2px 2px 2px 0;
  padding: 12px 13px 2px 18px;
  background: #5b5b5b;
  border: 1px solid var(--dark);
  border-radius: 4px;
}

/* Scroll thumb */
.palette-body::before {
  content: "";
  position: absolute;
  top: 39px;
  left: 4px;
  width: 5px;
  height: 163px;
  border-radius: 2px;
  background: #444;
}

.object-row {
  display: flex;
  flex: none;
  align-items: center;
  gap: 8px;
}

.combo {
  display: flex;
  width: 410px;
  height: 24px;
  background: linear-gradient(#777, #606060);
  border: 1px solid var(--dark);
}

.combo select {
  flex: 1;
  padding-left: 3px;
  appearance: none;
}

.combo-arrow {
  display: grid;
  place-items: center;
  width: 14px;
  border-left: 1px solid var(--dark);
}

.property-list {
  flex: 1;
  display: flex;
  flex-direction: column;
  gap: 3px;
  min-height: 0;
  overflow: hidden;
}

table {
  width: 482px;
  flex: none;
  border-collapse: separate;
  border-spacing: 0;
  table-layout: fixed;
  padding-left: 18px;
}

caption {
  height: 20px;
  padding: 0 6px;
  background: #494949;
  border: 1px solid #303030;
  font-weight: 700;
  line-height: 18px;
  text-align: left;
}

caption button {
  float: right;
  width: 6px;
  height: 2px;
  margin-top: 8px;
  background: #fff;
}

th,
td {
  height: 19px;
  padding: 1px 2px 0;
  border: solid #505050;
  border-width: 0 1px 1px 0;
  font-weight: 400;
  line-height: 16px;
  text-align: left;
  vertical-align: top;
}

th {
  width: 217px;
  padding: 2px 5px 0;
  border-left-width: 1px;
}

td svg,
td i {
  display: inline-block;
  vertical-align: middle;
}

td svg {
  margin-right: 4px;
  color: #c4c4c4;
}

td .head {
  margin: 0 5px 2px 2px;
}

.line {
  width: 62px;
  height: 1px;
  margin: 0 5px 0 2px;
  background: #fff;
}

.swatch {
  width: 10px;
  height: 10px;
  margin: 0 6px 2px 1px;
  border: 1px solid #000;
  border-radius: 1px;
}

.swatch.white {
  background: #fff;
}

.readonly {
  color: #a8a8a8;
}

.spaced {
  white-space: pre;
}

/* Drawing area */
.editor {
  flex: 1;
  display: flex;
  flex-direction: column;
  min-width: 0;
  margin-top: 3px;
}

.canvas {
  position: relative;
  flex: 1;
  min-height: 0;
  background: var(--canvas);
}

.drawing {
  width: 100%;
  height: 100%;
}

.plot-title {
  font: 6px "Liberation Serif", serif;
  fill: #8a4a82;
}

.viewcube {
  position: absolute;
  top: 8px;
  right: 8px;
}

.viewcube text {
  font: 700 16px "Liberation Sans", sans-serif;
  fill: #b9babc;
  text-anchor: middle;
}

.viewcube .cube-face {
  font-size: 10px;
  fill: #4c525b;
}

.wcs {
  position: absolute;
  top: 134px;
  right: 41px;
  gap: 6px;
  width: 48px;
  height: 17px;
  background: #8f93a0;
  border: 1px solid #a9abb4;
  border-radius: 4px;
  color: #555b66;
  font: 11px "Liberation Sans", sans-serif;
}

.navbar {
  position: absolute;
  top: 176px;
  right: 2px;
  border-radius: 4px;
  background: #585c60;
}

.command-history {
  height: 40px;
  background: #c6c6c6;
  border-top: 2px solid #5b5b5b;
  border-bottom: 1px solid #777;
}

.command-line {
  height: 23px;
  background: #fff;
  border-bottom: 1px solid #777;
}

/* Status bar */
.statusbar {
  display: flex;
  flex: none;
  gap: 1px;
  height: 29px;
  background: #383838;
  border-top: 1px solid #707070;
  color: #fff;
}

.layout-tabs {
  display: flex;
  align-items: flex-start;
  flex: 1;
  padding-left: 9px;
}

.layout-tabs button {
  width: 65px;
  height: 17px;
  background: #5a5a5a;
  clip-path: polygon(0 0, 100% 0, calc(100% - 5px) 14px, calc(100% - 8px) 100%, 9px 100%, 6px 14px);
  color: #b0b0b0;
}

.layout-tabs .active {
  width: 62px;
  background: linear-gradient(#5b5b5b, #8c8c8c);
  color: #fff;
  font-weight: 700;
}

.layout-tabs .add {
  width: 24px;
  margin-left: 2px;
  clip-path: none;
  border-radius: 10px 2px 10px 4px;
  color: #ddd;
  font-weight: 700;
}

.status-group {
  display: flex;
  align-items: stretch;
  height: 27px;
  background: #4e4e4e;
  border: 1px solid #7d7d7d;
}

.status-group button {
  min-width: 24px;
  padding: 0 3px;
  gap: 4px;
  color: #c8c8c8;
}

.status-group button:only-child,
.status-group .wide,
.status-group .drop {
  color: #fff;
}

.status-group .drop {
  min-width: 16px;
}

.status-group .wide {
  padding: 0 4px;
}

.status-group .divided {
  border-left: 1px solid #7d7d7d;
}

.status-group .on {
  color: #2196ff;
}

.status-group.last {
  width: 40px;
  border-right: 0;
  overflow: hidden;
}

.status-group.last button {
  flex: none;
}

/* Taskbar */
.taskbar {
  display: flex;
  flex: none;
  height: 26px;
  background: #020408;
  color: #fff;
}

.taskbar > button {
  width: 37px;
  padding: 4px 2px 0 0;
}

.taskbar .running {
  background: #26292e;
}

.ps {
  width: 16px;
  height: 15px;
  border: 1px solid #00c8ff;
  color: #00c8ff;
  font-size: 9px;
  line-height: 13px;
}

.imo {
  font: 700 6px "Liberation Sans", sans-serif;
  fill: #fff;
  text-anchor: middle;
}

.tray {
  display: flex;
  align-items: center;
  gap: 10px;
  margin-left: auto;
  padding: 4px 14px 0 0;
}

.tray .chevron {
  margin: 0 2px 0 6px;
}

.tray time {
  margin: 0 10px 0 6px;
}
```
